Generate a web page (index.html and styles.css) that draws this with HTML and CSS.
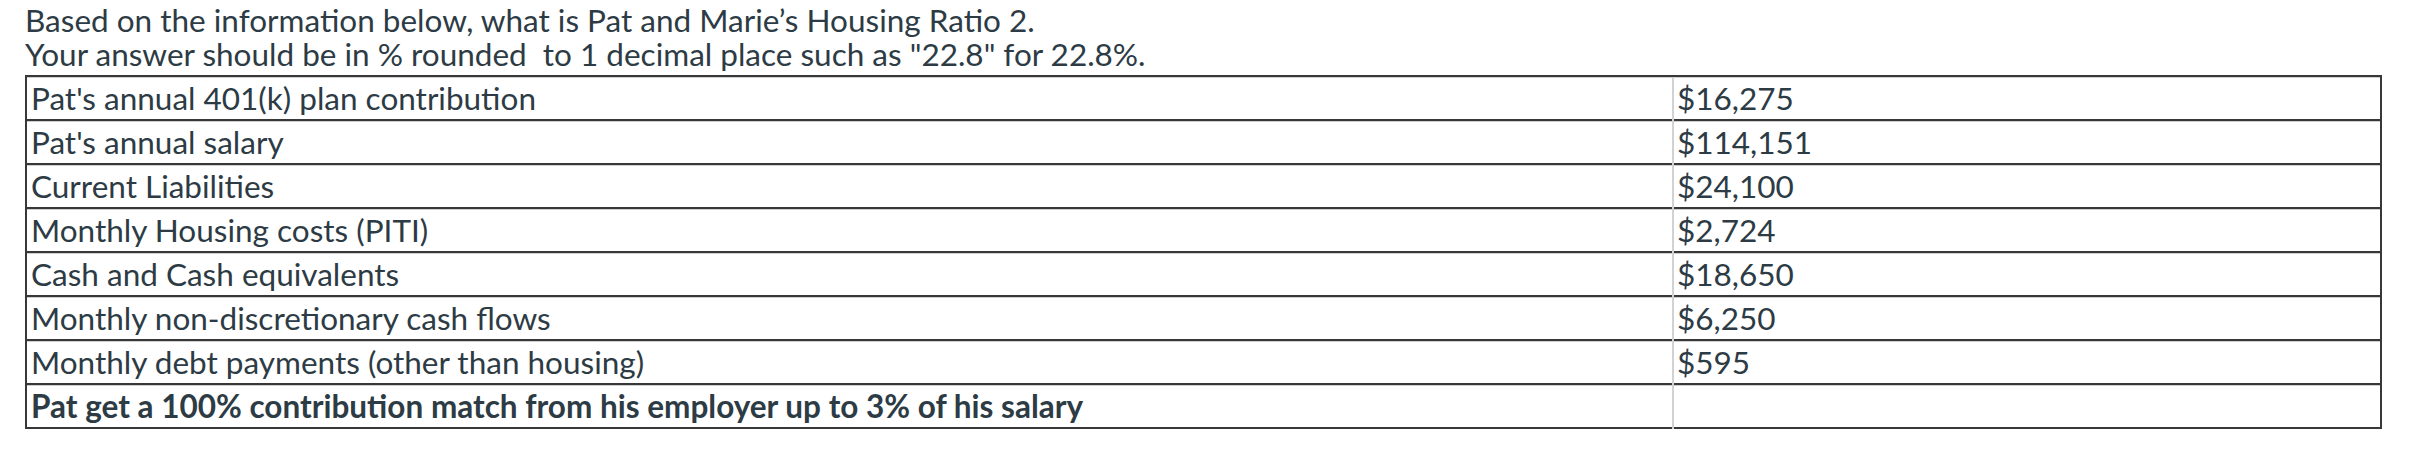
FILE: index.html
```html
<!DOCTYPE html>
<html>
<head>
<meta charset="utf-8">
<link rel="stylesheet" href="styles.css">
</head>
<body>
<div class="page">
  <p class="q">Based on the information below, what is Pat and Marie’s Housing Ratio 2.<br>Your answer should be in % rounded&nbsp; to 1 decimal place such as "22.8" for 22.8%.</p>
  <table class="data">
    <tr><td class="lbl">Pat's annual 401(k) plan contribution</td><td class="val">$16,275</td></tr>
    <tr><td class="lbl">Pat's annual salary</td><td class="val">$114,151</td></tr>
    <tr><td class="lbl">Current Liabilities</td><td class="val">$24,100</td></tr>
    <tr><td class="lbl">Monthly Housing costs (PITI)</td><td class="val">$2,724</td></tr>
    <tr><td class="lbl">Cash and Cash equivalents</td><td class="val">$18,650</td></tr>
    <tr><td class="lbl">Monthly non-discretionary cash flows</td><td class="val">$6,250</td></tr>
    <tr><td class="lbl">Monthly debt payments (other than housing)</td><td class="val">$595</td></tr>
    <tr><td class="lbl"><strong>Pat get a 100% contribution match from his employer up to 3% of his salary</strong></td><td class="val"></td></tr>
  </table>
</div>
</body>
</html>
```

FILE: styles.css
```css
html, body {
  margin: 0;
  padding: 0;
  background: #ffffff;
}
.page {
  padding: 3px 0 0 25px;
  font-family: Lato, "Liberation Sans", sans-serif;
  font-size: 31.5px;
  color: #2d3b45;
}
.q {
  margin: 0 0 4px 0;
  line-height: 34px;
}
.data {
  width: 2357px;
  border-collapse: collapse;
  border: 2px solid #383838;
}
.data td {
  height: 44px;
  box-sizing: border-box;
  padding: 0 4px;
  line-height: 32px;
  vertical-align: middle;
  border-top: 2px solid #383838;
  box-shadow: inset 0 1px 0 #cfcfcf;
}
.data td.lbl {
  width: 1647px;
}
.data td.val {
  border-left: 2px solid #d2d2d2;
  padding-left: 3px;
}
.data strong {
  font-weight: 700;
}
```
